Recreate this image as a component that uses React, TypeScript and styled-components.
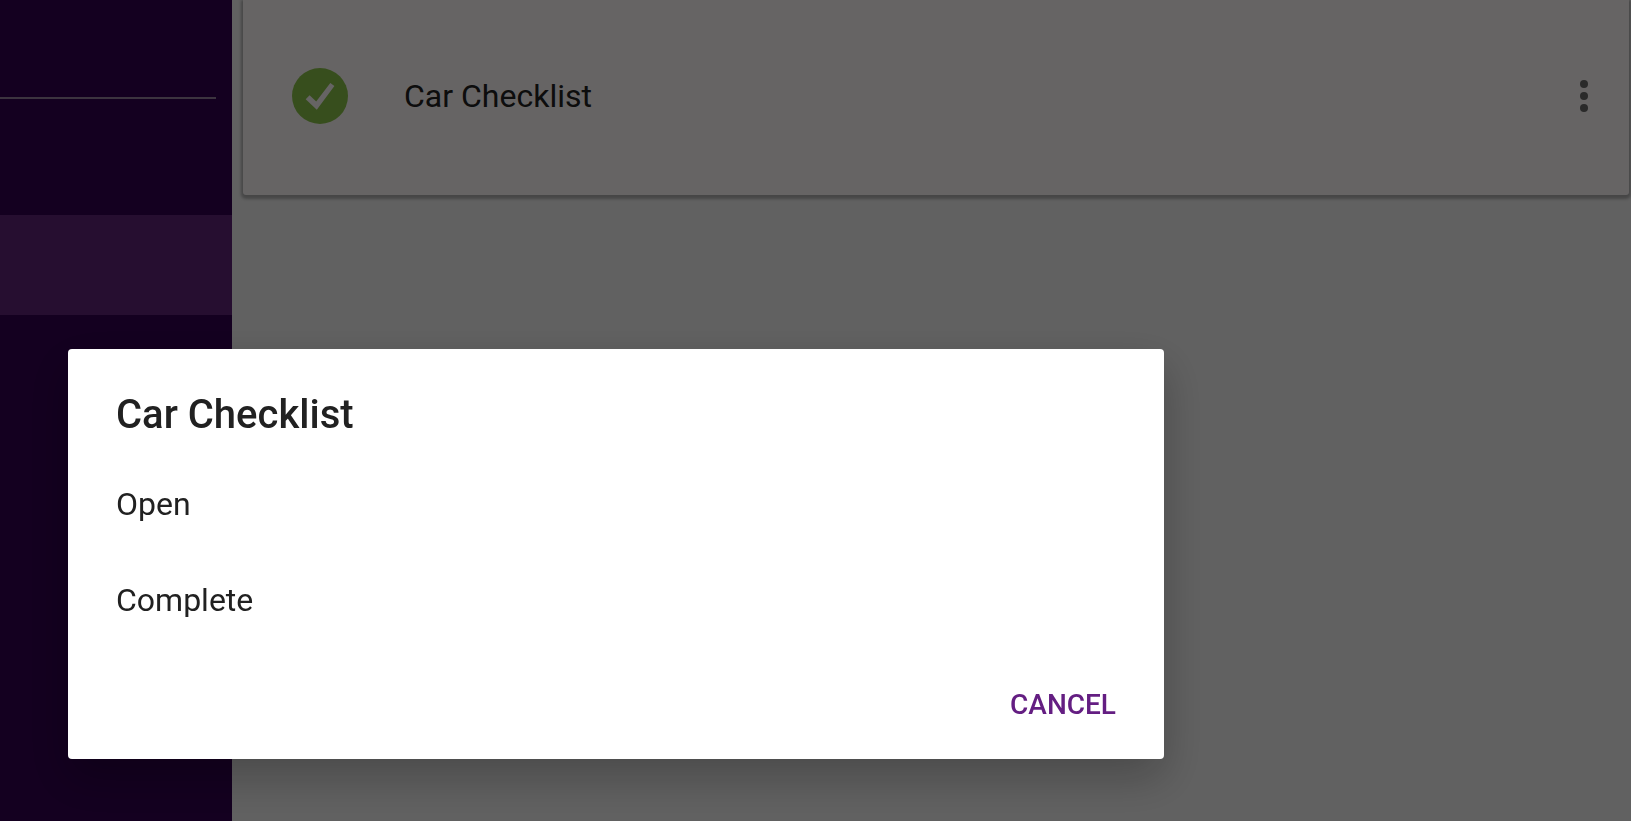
import React from 'react';
import styled, { createGlobalStyle } from 'styled-components';

const GlobalStyle = createGlobalStyle`
  * { box-sizing: border-box; }
  body {
    margin: 0;
    background: #f2f2f2;
    font-family: Roboto, sans-serif;
    color: #212121;
  }
  h1, h2, p, ul { margin: 0; padding: 0; }
  button { font-family: inherit; border: 0; padding: 0; background: none; cursor: pointer; }
`;

const Page = styled.div`
  display: flex;
  min-height: 100vh;
  overflow: hidden;
`;

const Sidebar = styled.nav`
  flex: 0 0 232px;
  background: #320050;
`;

const Divider = styled.hr`
  height: 2px;
  margin: 97px 16px 116px 0;
  border: 0;
  background: #96829d;
`;

const NavItem = styled.a`
  display: block;
  height: 100px;
  background: #5f2378;
`;

const Content = styled.main`
  flex: 1;
  min-width: 0;
  padding: 0 2px 0 11px;
`;

const Card = styled.article`
  display: flex;
  align-items: center;
  height: 195px;
  padding: 0 32px 3px 49px;
  border-radius: 0 0 3px 3px;
  background: #fffafb;
  box-shadow: 0 2px 3px 2px rgba(0, 0, 0, 0.28);
`;

const StatusIcon = styled.svg`
  width: 56px;
  height: 56px;
  margin-right: 56px;
`;

const CardTitle = styled.h1`
  flex: 1;
  font-size: 32px;
  font-weight: 400;
  line-height: 40px;
`;

const MoreButton = styled.button`
  display: grid;
  place-items: center;
  width: 26px;
  height: 48px;
`;

const Scrim = styled.div`
  position: fixed;
  inset: 0;
  padding: 349px 467px 62px 68px;
  background: rgba(0, 0, 0, 0.6);
`;

const Dialog = styled.section`
  padding: 42px 48px 30px;
  border-radius: 4px;
  background: #fff;
  box-shadow: 0 18px 44px rgba(0, 0, 0, 0.25);
`;

const DialogTitle = styled.h2`
  margin-bottom: 17px;
  font-size: 40px;
  font-weight: 500;
  line-height: 48px;
`;

const Option = styled.button`
  display: block;
  width: 100%;
  height: 96px;
  font-size: 32px;
  line-height: 40px;
  text-align: left;
  color: #212121;
`;

const Actions = styled.div`
  display: flex;
  justify-content: flex-end;
  padding-top: 33px;
`;

const TextButton = styled.button`
  height: 48px;
  font-size: 28px;
  font-weight: 500;
  line-height: 32px;
  text-transform: uppercase;
  color: #641e82;
`;

export default function App() {
  return (
    <>
      <GlobalStyle />
      <Page>
        <Sidebar aria-label="Main">
          <Divider />
          <NavItem href="#checklists" aria-label="Checklists" />
        </Sidebar>
        <Content>
          <Card>
            <StatusIcon viewBox="0 0 56 56" aria-hidden="true">
              <circle cx="28" cy="28" r="28" fill="#8bc34a" />
              <path d="M13.7 31.2 L17.6 27.2 L24.2 33.6 L38.3 15 L42.4 18.1 L24.8 41.7 Z" fill="#fffafb" />
            </StatusIcon>
            <CardTitle>Car Checklist</CardTitle>
            <MoreButton aria-label="More options">
              <svg width="8" height="32" viewBox="0 0 8 32" fill="#696969">
                <circle cx="4" cy="4" r="4" />
                <circle cx="4" cy="16" r="4" />
                <circle cx="4" cy="28" r="4" />
              </svg>
            </MoreButton>
          </Card>
        </Content>
      </Page>
      <Scrim>
        <Dialog role="dialog" aria-modal="true" aria-labelledby="dialog-title">
          <DialogTitle id="dialog-title">Car Checklist</DialogTitle>
          <Option>Open</Option>
          <Option>Complete</Option>
          <Actions>
            <TextButton>Cancel</TextButton>
          </Actions>
        </Dialog>
      </Scrim>
    </>
  );
}
